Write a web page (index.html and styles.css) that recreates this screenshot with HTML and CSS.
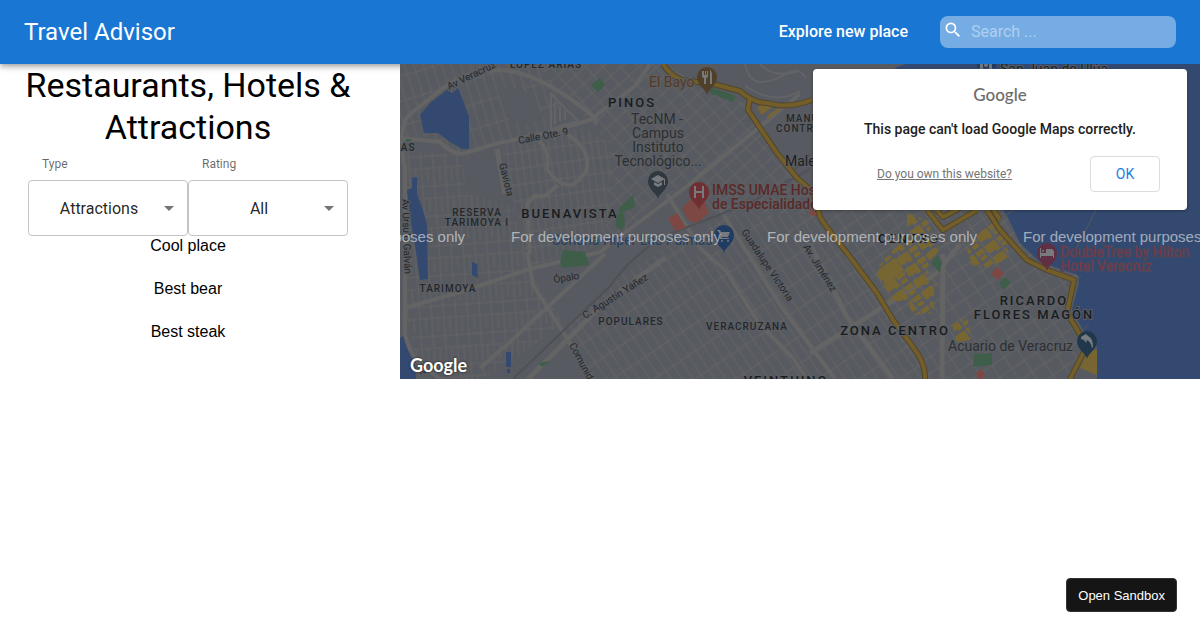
FILE: index.html
```html
<!DOCTYPE html>
<html lang="en">
<head>
<meta charset="utf-8">
<meta name="viewport" content="width=device-width, initial-scale=1">
<title>Travel Advisor</title>
<link rel="stylesheet" href="styles.css">
</head>
<body>
<header class="app-bar">
  <h1 class="brand">Travel Advisor</h1>
  <div class="tools">
    <h2 class="explore">Explore new place</h2>
    <label class="search">
      <svg class="search-icon" viewBox="0 0 24 24" aria-hidden="true"><path d="M15.500 14h-.79l-.28-.27A6.471 6.471 0 0 0 16 9.500 6.500 6.500 0 1 0 9.500 16c1.610 0 3.090-.59 4.230-1.570l.27.28v.79l5 4.990L20.490 19l-4.990-5zm-6 0C7.010 14 5 11.990 5 9.500S7.010 5 9.500 5 14 7.010 14 9.500 11.990 14 9.500 14z"/></svg>
      <input class="search-input" type="text" placeholder="Search ..." aria-label="Search">
    </label>
  </div>
</header>
<main class="layout">
  <section class="places">
    <h2 class="title">Restaurants, Hotels &amp; Attractions</h2>
    <div class="filters">
      <div class="field">
        <label class="field-label" for="type">Type</label>
        <div class="select-box">
          <select class="select" id="type"><option>Restaurants</option><option>Hotels</option><option selected>Attractions</option></select>
          <svg class="caret" viewBox="0 0 24 24" aria-hidden="true"><path d="M7 10l5 5 5-5z"/></svg>
        </div>
      </div>
      <div class="field">
        <label class="field-label" for="rating">Rating</label>
        <div class="select-box">
          <select class="select" id="rating"><option>All</option><option>Above 3</option><option>Above 4</option></select>
          <svg class="caret" viewBox="0 0 24 24" aria-hidden="true"><path d="M7 10l5 5 5-5z"/></svg>
        </div>
      </div>
    </div>
    <div class="place-list">
      <div>Cool place</div>
      <div>Best bear</div>
      <div>Best steak</div>
    </div>
  </section>
  <section class="map">
    <svg class="map-canvas" viewBox="0 0 800 315" preserveAspectRatio="xMidYMid slice" role="img" aria-label="Map of Veracruz">
      <defs>
        <pattern id="g1" width="9" height="24" patternUnits="userSpaceOnUse" patternTransform="rotate(-17)"><path class="street" d="M4 0V24M0 12H9"/></pattern>
        <pattern id="g2" width="12" height="30" patternUnits="userSpaceOnUse" patternTransform="rotate(-4)"><path class="street" d="M2 0V30M0 4H12M8 16V30M2 16H12"/></pattern>
        <pattern id="g3" width="9" height="23" patternUnits="userSpaceOnUse" patternTransform="rotate(-34)"><path class="street" d="M4 0V23M0 12H9"/></pattern>
        <pattern id="g4" width="13" height="12" patternUnits="userSpaceOnUse" patternTransform="rotate(-42)"><path class="street" d="M6 0V12M0 6H13"/></pattern>
        <pattern id="g5" width="15" height="14" patternUnits="userSpaceOnUse" patternTransform="rotate(-34)"><path class="street" d="M7 0V14M0 7H15"/></pattern>
        <pattern id="g6" width="7" height="16" patternUnits="userSpaceOnUse" patternTransform="rotate(-8)"><path class="street" d="M3 0V16M0 8H7"/></pattern>
        <pattern id="shops" width="26" height="14" patternUnits="userSpaceOnUse" patternTransform="rotate(-36)"><path class="commerce" d="M1 1h13v11H9v-2H1zM16 1h9v5h-9zM17 8h7v4h-7z"/></pattern>
        <path id="pin" d="M0 18C-1 12-10 9-10 0A10 10 0 0 1 10 0C10 9 1 12 0 18z"/>
      </defs>
      <path class="land" d="M0 0H800V315H0z"/>
      <path fill="url(#g1)" d="M0 0H135L165 30 147 68 62 90 40 80 0 74z"/>
      <path fill="url(#g2)" d="M4 85L62 92H100L118 160 130 205 5 244z"/>
      <path fill="url(#g6)" d="M100 80L150 68 185 64 210 80V130L205 180 130 203z"/>
      <path fill="url(#g2)" d="M5 244L130 208 163 258 110 300 80 315H40L15 290z"/>
      <path fill="url(#g4)" d="M135 0H265L300 20 346 40 358 61 413 128V150L320 151 270 120 230 165 205 178 210 80 165 30z"/>
      <path fill="url(#g3)" d="M163 268L215 215 280 175 327 151H420L540 315H190z"/>
      <path fill="url(#g5)" d="M412 140H600L640 198 678 211 667 249 687 286 670 315H525L420 160z"/>
      <path class="land" d="M97 26l25-2 23 28-20 10-15-6zM62 95l35-3 18 50-48-12zM270 172l34-10 12 25-16 6z"/>
      <path class="outline" d="M345 0q4 18 16 18t25-8 20 4M360 0q14 15 38 7M345 22q30 20 55 5M151 30v35q12-4 27-8zM155 38v22M160 42v15M165 46v10"/>
      <g class="road">
        <path d="M5 105Q-3 62 10 50L42 25Q65 7 95 6t68 24 32 30M0 74L40 78Q52 90 62 90L95 80 150 68 190 56 235 22 250 0"/>
        <path d="M138 76Q150 86 147 105 158 122 172 121 190 110 187 95T165 69M158 121L145 132H134L127 140 130 190M5 100V270Q8 285 18 298L40 315M5 244L60 228 130 205 200 188 230 165 290 120 400 30M127 188L133 221 163 268 190 315M80 304L110 278 140 250 205 190M267 130L280 151 300 184 327 208 343 234 360 261 393 294 407 315M318 142L353 198 380 241 435 315"/>
        <path class="wide" d="M543 190L542 315M410 180L447 253 493 315M410 289L537 209 560 180M128 315L205 238 265 194M105 130L97 85"/>
      </g>
      <path class="rail" d="M113 315L210 222Q235 188 267 171L350 139 410 105M390 110l20-20"/>
      <g class="water">
        <path d="M20 51L30 39 47 26l5 3 6-5 5 12 6 17v32h-7L50 78 38 69H24zM12 114l5-1v17l6 16 4 15 1 54-8 1-3-22-5-30-5-38 5-2zM0 274l3-2 4 12 8 17 1 14H0zM72 198l5 2 1 14-6-3zM106 288h5v15h-5zM107 305h3v4h-3z"/>
        <path d="M495 4Q530-10 560 0H800V315H697L697 283 683 266 672 246 679 219 678 211 640 198 620 179 608 154 600 140z"/>
      </g>
      <g class="park">
        <path d="M200 14l5 7-7 7-7-7zM163 186l22 2 4 13-26 3-3-4zM138 299l13-2-9 6zM300 20l13 4 23 8-3 6-23-9zM220 143l13-12 2 12-12 5v13h-6zM6 75h6l-2 2-4 1zM216 150h8l1 12-4 4-5-4zM605 213l6 5-7 8-5-7zM574 290l18-1v12l-19 2zM537 191l5 7-2 11-9-10zM202 101l11-7-9 6z"/>
      </g>
      <path class="medical" d="M290 136L303 134 309 149 297 159 288 156 282 144zM268 154L277 149 286 164 275 167zM597 203L604 209 598 216 591 210zM576 309L582 305 585 312 581 315H578zM410 144L418 147V153L410 151z"/>
      <path fill="url(#shops)" d="M507 149L527 156 540 186 530 196 527 213 535 216 533 249 512 251 508 236 490 238 475 206 490 189 507 173zM567 186L590 156 607 176 608 193 592 203 573 203zM552 261L567 253 572 276 557 278z"/>
      <path class="commerce" d="M357 44l5-4 10 3-10 8zM367 52l11-8 2 2-12 9zM688 286h9v25l-17-7zM478 206l17-12 9 12-19 15z"/>
      <g id="highways">
        <path class="highway-edge" d="M263 0Q274 17 290 17L313 20 340 27Q353 39 367 39 387 45 412 36M350 34L348 46 377 89 397 114 413 128 420 153Q426 163 447 189L477 229 493 256 513 283Q526 300 525 315M587 146L600 166 627 196 647 206 674 216 667 249 687 282 670 315M527 146L543 166 577 146M533 142L543 153 560 144M590 140L600 156"/>
        <path class="highway" d="M263 0Q274 17 290 17L313 20 340 27Q353 39 367 39 387 45 412 36M350 34L348 46 377 89 397 114 413 128 420 153Q426 163 447 189L477 229 493 256 513 283Q526 300 525 315M587 146L600 166 627 196 647 206 674 216 667 249 687 282 670 315M527 146L543 166 577 146M533 142L543 153 560 144M590 140L600 156"/>
      </g>
      <path class="ferry" d="M697 144L676 185M600 154L620 143M674 218l7-6M678 250l9-5M683 265l6-4"/>

      <g class="label street-name">
        <text transform="translate(49 26) rotate(-26)">Av Veracruz</text>
        <text transform="translate(119 80) rotate(-11)">Calle Ote. 9</text>
        <text transform="translate(99 100) rotate(76)">Gaviota</text>
        <text transform="translate(2 135) rotate(88)">Av Ursulo Galván</text>
        <text transform="translate(154 219) rotate(-9)">Ópalo</text>
        <text transform="translate(185 255) rotate(-32)">C. Agustín Yáñez</text>
        <text transform="translate(169 281) rotate(62)">Comunidad</text>
        <text transform="translate(341 168) rotate(56)">Guadalupe Victoria</text>
        <text transform="translate(403 183) rotate(58)">Av. Jiménez</text>
        <text transform="translate(18 301) rotate(75)">nz</text>
      </g>
      <g class="label district">
        <text x="110" y="4">LÓPEZ ARIAS</text>
        <text x="-7" y="87">GAS</text>
        <text x="77" y="152" text-anchor="middle">RESERVA</text>
        <text x="77" y="162" text-anchor="middle">TARIMOYA I</text>
        <text x="48" y="228" text-anchor="middle">TARIMOYA</text>
        <text x="231" y="261" text-anchor="middle">POPULARES</text>
        <text x="347" y="266" text-anchor="middle">VERACRUZANA</text>
        <text x="386" y="58">MANUEL</text>
        <text x="376" y="68">CONTRERAS</text>
      </g>
      <g class="label quarter">
        <text x="170" y="154" text-anchor="middle">BUENAVISTA</text>
        <text x="495" y="271" text-anchor="middle">ZONA CENTRO</text>
        <text x="509" y="179" text-anchor="middle">CENTRO</text>
        <text x="634" y="241" text-anchor="middle">RICARDO</text>
        <text x="634" y="255" text-anchor="middle">FLORES MAGÓN</text>
        <text x="232" y="43" text-anchor="middle">PINOS</text>
        <text x="386" y="321" text-anchor="middle">VEINTIUNO</text>
      </g>
      <g class="label place">
        <text x="257" y="60" text-anchor="middle">TecNM -</text>
        <text x="258" y="74" text-anchor="middle">Campus</text>
        <text x="258" y="88" text-anchor="middle">Instituto</text>
        <text x="258" y="102" text-anchor="middle">Tecnológico...</text>
        <text x="548" y="287">Acuario de Veracruz</text>
        <text class="strong" x="385" y="102">Malecón</text>
        <text class="strong" x="600" y="10">San Juan de Ulúa</text>
        <text class="food" x="249" y="23">El Bayo</text>
        <text class="health" x="312" y="131">IMSS UMAE Hospital</text>
        <text class="health" x="312" y="145">de Especialidades</text>
        <text class="hotel" x="660" y="193">DoubleTree by Hilton</text>
        <text class="hotel" x="660" y="207">Hotel Veracruz</text>
        <text class="shop" x="152" y="181">Soriana Híper Las Palmas</text>
      </g>
      <g transform="translate(307 13)"><use class="pin-food" href="#pin"/><path class="glyph" d="M-5-6v5q0 2 2 2v6h2v-6q2 0 2-2v-5H0v4h-1v-4h-1v4h-1v-4zM3-7q2 1 2 5v9H3z"/></g>
      <g transform="translate(258 117)"><use class="pin-school" href="#pin"/><path class="glyph" d="M-7-2L0-6 7-2 0 2zM-4 1l4 2 4-2v3L0 6l-4-2zM6-2h1v6H6z"/></g>
      <g transform="translate(299 128)"><use class="pin-health" href="#pin"/><path class="glyph" d="M-5-6h2v5h6v-5h2V6H3V1h-6v5h-2z"/></g>
      <g transform="translate(324 171)"><use class="pin-shop" href="#pin"/><path class="glyph" d="M-7-5h3l1 2h9L4 2h-6v1h7v1h-9V2l1-1-3-5h-1z"/><circle class="glyph" cx="-2" cy="6" r="1"/><circle class="glyph" cx="4" cy="6" r="1"/></g>
      <g transform="translate(647 189)"><use class="pin-hotel" href="#pin"/><path class="glyph" d="M-7-5h1v5h5v-4h6l2 2v7H6V3H-6v2h-1z"/><circle class="glyph" cx="-4" cy="-2" r="1"/></g>
      <g transform="translate(687 277)"><use class="pin-school aquarium" href="#pin"/><path class="glyph" d="M-6-4Q-3-6-1-7L1-5Q6-3 6 6L5 7Q4 1 0-1L-1 2-3-1-6-2z"/></g>
      <path class="harbor" d="M577-8h19V4H577z"/><path class="harbor-glyph" d="M580 0h3v5h-3zM589 0h3v5h-3z"/><circle class="harbor-glyph" cx="586" cy="1" r="2"/>
      <g class="watermark">
        <text x="-145" y="178">For development purposes only</text>
        <text x="111" y="178">For development purposes only</text>
        <text x="367" y="178">For development purposes only</text>
        <text x="623" y="178">For development purposes only</text>
      </g>
    </svg>
    <a class="map-logo" href="#map">Google</a>
    <div class="notice" role="alertdialog" aria-labelledby="notice-text">
      <div class="notice-logo">Google</div>
      <p class="notice-text" id="notice-text">This page can't load Google Maps correctly.</p>
      <div class="notice-actions">
        <a class="notice-link" href="#help">Do you own this website?</a>
        <button class="notice-ok" type="button">OK</button>
      </div>
    </div>
  </section>
</main>
<button class="sandbox" type="button">Open Sandbox</button>
</body>
</html>
```
FILE: styles.css
```css
* { box-sizing: border-box; }
body { margin: 0; font-family: "Liberation Sans", Arial, sans-serif; font-size: 16px; color: #000; background: #fff; }
h1, h2, p { margin: 0; font-weight: 400; }
button, input, select { font: inherit; }

.app-bar { position: relative; display: flex; align-items: center; justify-content: space-between; height: 64px; padding: 0 24px; background: #1976d2; color: #fff; font-family: Roboto, sans-serif; box-shadow: 0 2px 4px -1px rgba(0,0,0,.2), 0 4px 5px rgba(0,0,0,.14), 0 1px 10px rgba(0,0,0,.12); }
.brand { font-size: 24px; line-height: 32px; }
.tools { display: flex; align-items: center; gap: 32px; }
.explore { font-size: 16px; line-height: 28px; font-weight: 500; }
.search { display: flex; align-items: flex-start; width: 236px; height: 32px; border-radius: 8px; background: rgba(255,255,255,.4); }
.search-icon { flex: none; width: 20px; height: 20px; margin: 4px 8px 0 3px; fill: #fff; }
.search-input { flex: 1; min-width: 0; height: 31px; padding: 0; border: 0; outline: 0; background: none; color: #fff; }
.search-input::placeholder { color: #fff; opacity: .42; }

.layout { display: grid; grid-template-columns: 1fr 2fr; align-items: start; }
.places { padding-right: 24px; text-align: center; }
.title { font: 400 34px/42px Roboto, sans-serif; }
.filters { display: flex; padding-left: 28px; font-family: Roboto, sans-serif; }
.field { width: 160px; }
.field-label { display: block; padding: 6px 14px; color: rgba(0,0,0,.6); text-align: left; font-size: 12px; line-height: 20px; }
.select-box { position: relative; }
.select { display: block; width: 100%; height: 56px; padding: 0 32px 0 14px; border: 1px solid #c4c4c4; border-radius: 4px; appearance: none; background: none; color: rgba(0,0,0,.87); text-align: center; text-align-last: center; }
.caret { position: absolute; top: 16px; right: 7px; width: 24px; height: 24px; fill: #757575; pointer-events: none; }
.place-list { display: grid; gap: 23px; line-height: 20px; }

.map { position: relative; height: 50vh; overflow: hidden; font-family: Roboto, sans-serif; }
.map-canvas { display: block; width: 100%; height: 100%; }
.land { fill: #575a60; }
.street { fill: none; stroke: #636464; stroke-width: 1; }
.outline { fill: none; stroke: #626467; stroke-width: 2; }
.road { fill: none; stroke: #646464; stroke-width: 4; stroke-linejoin: round; }
.wide { stroke-width: 5; }
.rail { fill: none; stroke: #505156; stroke-width: 2; }
.water { fill: #34496f; }
.park { fill: #3f5e4a; }
.medical { fill: #7d4844; }
.commerce { fill: #776632; }
.highway, .highway-edge { fill: none; stroke-linejoin: round; }
.highway { stroke: #735e29; stroke-width: 4; }
.highway-edge { stroke: #51452c; stroke-width: 6; }
.ferry { fill: none; stroke: #54585e; stroke-width: 1; }
.label { fill: #24272b; stroke: #5b5e63; stroke-width: 2; stroke-linejoin: round; paint-order: stroke; }
.street-name { font-size: 10px; }
.district { font-size: 10px; font-weight: 500; letter-spacing: 1px; }
.quarter { font-size: 13px; font-weight: 500; letter-spacing: 2px; fill: #191c1f; }
.place { font-size: 14px; fill: #2b2f33; }
.strong { fill: #1c1f22; }
.food { fill: #573a23; }
.health { fill: #5a2928; font-weight: 500; }
.hotel { fill: #743848; stroke: #414b63; }
.shop { fill: #263e60; }
.pin-food { fill: #503f2a; }
.pin-school { fill: #303840; }
.aquarium { fill: #20384b; }
.pin-health { fill: #702f30; }
.pin-shop { fill: #203c62; }
.pin-hotel { fill: #612f43; }
.glyph { fill: #777b7e; }
.harbor { fill: #263b55; }
.harbor-glyph { fill: #6f7780; }
.watermark { font: 15px "Liberation Sans", Arial, sans-serif; fill: rgba(255,255,255,.55); }
.map-logo { position: absolute; left: 10px; bottom: 2px; color: #fff; font: 700 18px/24px Lato, sans-serif; text-decoration: none; text-shadow: 0 0 2px #333, 0 0 2px #333; }

.notice { position: absolute; top: 5px; right: 13px; width: 374px; padding: 14px 27px 18px; border-radius: 4px; background: #fff; text-align: center; box-shadow: 0 1px 3px rgba(0,0,0,.3); }
.notice-logo { color: #6b6b6b; font: 500 17px/24px Lato, sans-serif; }
.notice-text { margin-top: 12px; color: #212121; font-size: 14px; line-height: 20px; font-weight: 500; }
.notice-actions { display: flex; align-items: center; justify-content: space-between; margin-top: 17px; padding-left: 37px; }
.notice-link { color: #757575; font-size: 12px; }
.notice-ok { width: 70px; height: 36px; border: 1px solid #dadce0; border-radius: 4px; background: #fff; color: #1a80e6; font-size: 14px; }

.sandbox { position: fixed; right: 23px; bottom: 18px; height: 34px; padding: 0 11px; border: 1px solid #343434; border-radius: 4px; background: #151515; color: #fff; font-size: 13px; }
```
